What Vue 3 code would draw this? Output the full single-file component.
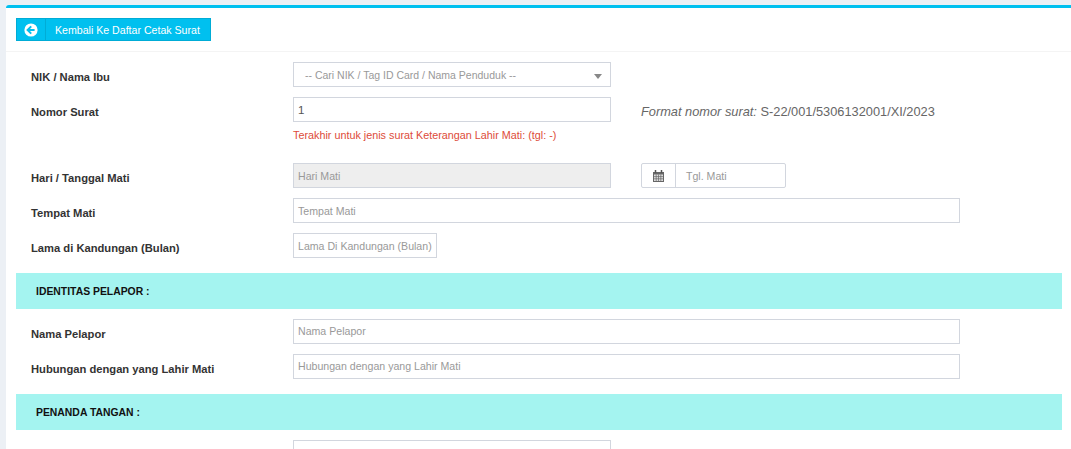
<script setup>
const dates = ["Tgl. Mati"];
</script>

<template>
  <div class="page">
    <div class="box">
      <div class="box-header">
        <a class="btn-back">
          <span class="btn-icon">
            <svg width="14" height="14" viewBox="0 0 14 14">
              <circle cx="7" cy="7" r="6.6" fill="#fff" />
              <path d="M7.2 3.4L3.6 7l3.6 3.6M4 7h6.6" fill="none" stroke="#00c0ef" stroke-width="2" />
            </svg>
          </span>
          <span class="btn-text">Kembali Ke Daftar Cetak Surat</span>
        </a>
      </div>

      <div class="box-body">
        <div class="row">
          <label>NIK / Nama Ibu</label>
          <div class="field select-box">
            <span>-- Cari NIK / Tag ID Card / Nama Penduduk --</span>
            <i class="caret"></i>
          </div>
        </div>

        <div class="row row-nomor">
          <label>Nomor Surat</label>
          <div class="nomor-col">
            <div class="field value">1</div>
            <p class="help">Terakhir untuk jenis surat Keterangan Lahir Mati: (tgl: -)</p>
          </div>
          <p class="format"><em>Format nomor surat:</em> S-22/001/5306132001/XI/2023</p>
        </div>

        <div class="row">
          <label>Hari / Tanggal Mati</label>
          <div class="field disabled">Hari Mati</div>
          <div class="date-group">
            <span class="addon">
              <svg width="11" height="12" viewBox="0 0 11 12">
                <path d="M0 2h11v10h-11z" fill="#666" />
                <path d="M2.5 0v3M8.5 0v3" stroke="#555" stroke-width="1.5" />
                <path d="M1 4.5h9v6.5h-9z" fill="#ddd" />
                <path d="M1 6.6h9M1 8.8h9M3.2 4.5v6.5M5.5 4.5v6.5M7.8 4.5v6.5" stroke="#666" stroke-width="0.7" />
              </svg>
            </span>
            <span class="date-input">{{ dates[0] }}</span>
          </div>
        </div>

        <div class="row">
          <label>Tempat Mati</label>
          <div class="field wide">Tempat Mati</div>
        </div>

        <div class="row">
          <label>Lama di Kandungan (Bulan)</label>
          <div class="field small">Lama Di Kandungan (Bulan)</div>
        </div>

        <div class="band">IDENTITAS PELAPOR :</div>

        <div class="row">
          <label>Nama Pelapor</label>
          <div class="field wide upper">Nama Pelapor</div>
        </div>

        <div class="row">
          <label>Hubungan dengan yang Lahir Mati</label>
          <div class="field wide upper">Hubungan dengan yang Lahir Mati</div>
        </div>

        <div class="band">PENANDA TANGAN :</div>

        <div class="row">
          <label></label>
          <div class="field"></div>
        </div>
      </div>
    </div>
  </div>
</template>

<style>
html,
body {
  margin: 0;
  height: 449px;
  overflow: hidden;
}
</style>

<style scoped>
.page {
  height: 449px;
  box-sizing: border-box;
  padding: 5px 0 0 6px;
  background: #ecf0f5;
  font-family: "Liberation Sans", Arial, sans-serif;
  font-size: 12px;
  overflow: hidden;
}

.box {
  background: #fff;
  border-top: 3px solid #00c0ef;
  border-radius: 3px 0 0 0;
  min-height: 500px;
}

.box-header {
  height: 44px;
  box-sizing: border-box;
  padding: 10px 10px 0;
  border-bottom: 1px solid #f4f4f4;
}

.btn-back {
  display: inline-flex;
  width: 195px;
  height: 23px;
  box-sizing: border-box;
  background: #00c0ef;
  border: 1px solid #00acd6;
  color: #fff;
  font-size: 10.6px;
  align-items: center;
  white-space: nowrap;
}

.btn-icon {
  width: 28px;
  height: 100%;
  display: flex;
  align-items: center;
  justify-content: center;
  border-right: 1px solid #00acd6;
}

.btn-text {
  padding-left: 9px;
}

.box-body {
  padding: 10px 9px 0 10px;
}

.row {
  display: flex;
  align-items: flex-start;
  margin-bottom: 10px;
}

.row label {
  width: 262px;
  margin-left: 15px;
  padding-top: 9px;
  flex: none;
  font-weight: 700;
  font-size: 11.2px;
  color: #333;
}

.field {
  width: 318px;
  height: 25px;
  box-sizing: border-box;
  border: 1px solid #d2d6de;
  padding: 0 4px;
  line-height: 25px;
  font-size: 10.6px;
  color: #999;
  background: #fff;
  flex: none;
}

.wide {
  width: 667px;
}

.upper {
  line-height: 23px;
}

.small {
  width: 144px;
  white-space: nowrap;
  overflow: hidden;
}

.value {
  color: #555;
  font-size: 11.5px;
}

.disabled {
  background: #eee;
}

.select-box {
  position: relative;
  padding-left: 11px;
  font-size: 10.5px;
}

.caret {
  position: absolute;
  right: 8px;
  top: 11px;
  border-top: 5px solid #888;
  border-left: 4px solid transparent;
  border-right: 4px solid transparent;
}

.row-nomor {
  margin-bottom: 19px;
}

.nomor-col {
  width: 318px;
  flex: none;
}

.help {
  margin: 5px 0 0;
  height: 17px;
  line-height: 17px;
  color: #dd4b39;
  font-size: 10.8px;
  white-space: nowrap;
}

.format {
  margin: 2px 0 0 30px;
  line-height: 25px;
  font-size: 12.8px;
  color: #666;
  white-space: nowrap;
}

.date-group {
  display: flex;
  width: 145px;
  height: 25px;
  box-sizing: border-box;
  margin-left: 30px;
  border: 1px solid #d2d6de;
  border-radius: 2px;
}

.addon {
  width: 33px;
  display: flex;
  align-items: center;
  justify-content: center;
  border-right: 1px solid #d2d6de;
}

.date-input {
  padding-left: 10px;
  line-height: 25px;
  font-size: 10.6px;
  color: #999;
}

.band {
  height: 36px;
  line-height: 37px;
  margin: 15px 0 10px;
  padding-left: 20px;
  background: #a4f4f0;
  color: #111;
  font-weight: 700;
  font-size: 10.4px;
}
</style>
